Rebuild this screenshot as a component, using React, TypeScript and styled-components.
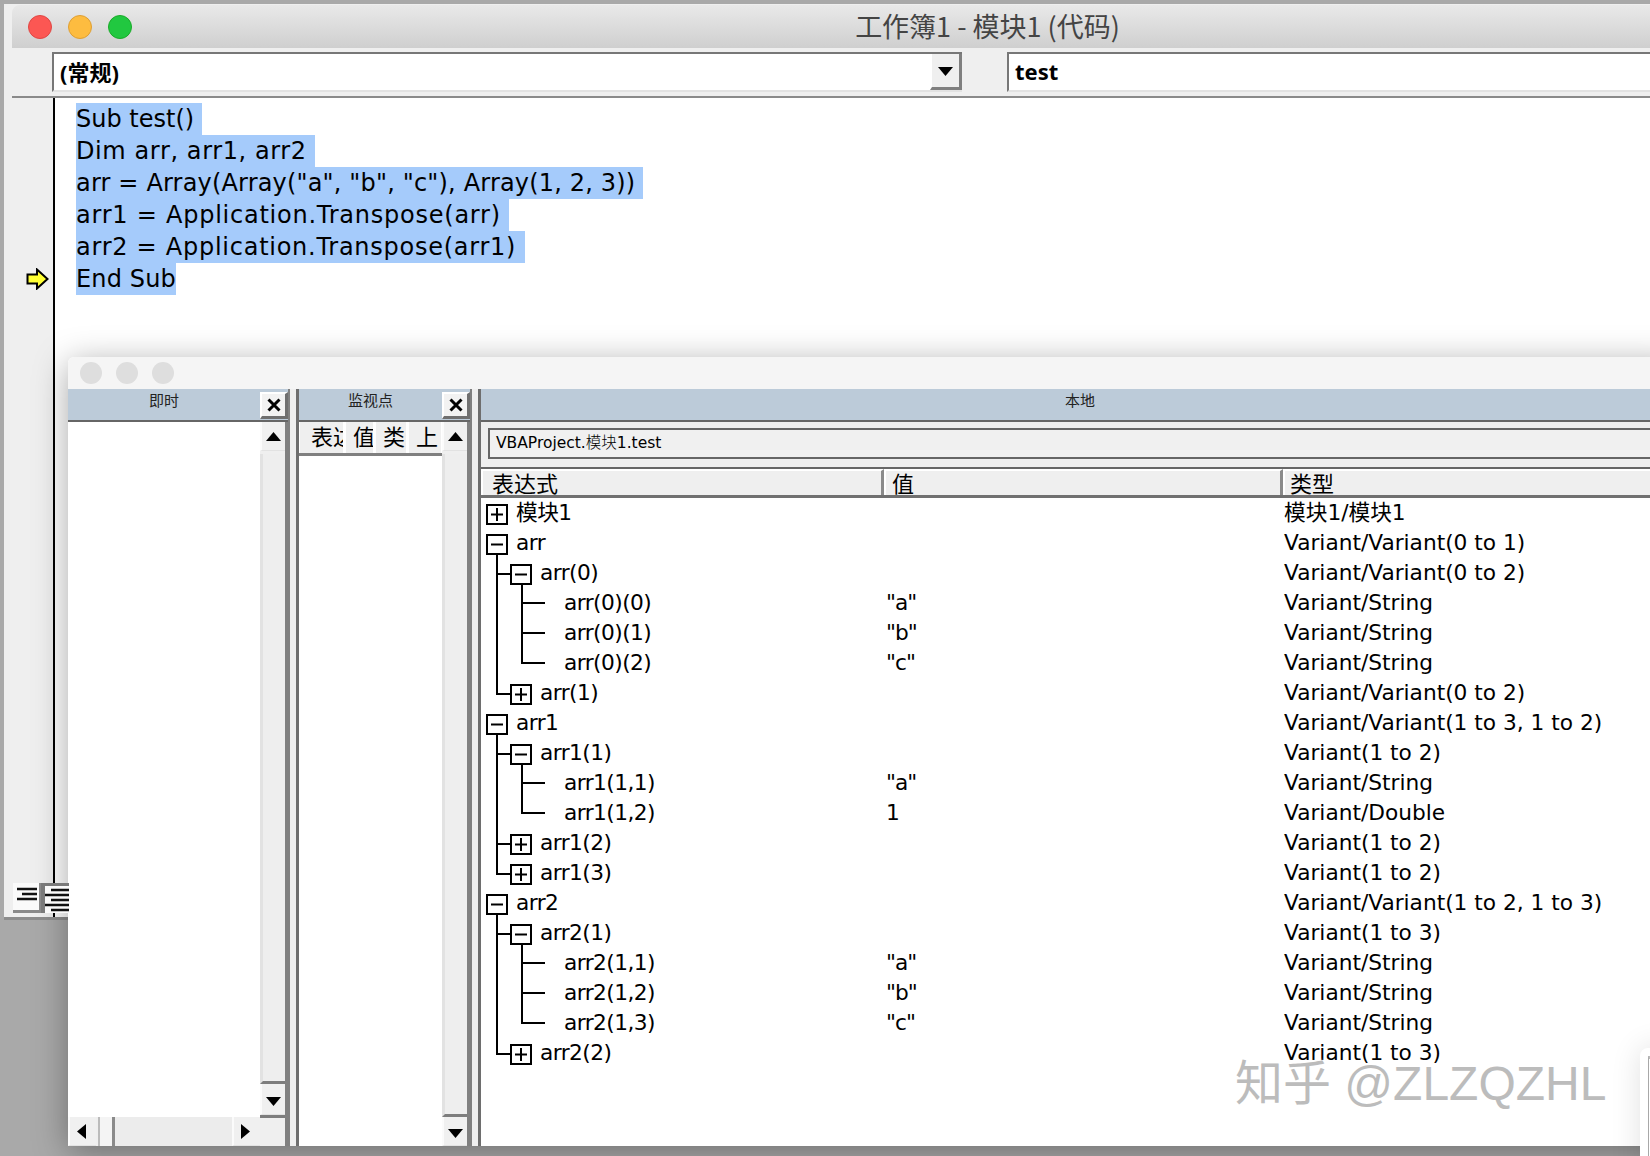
import styled, { createGlobalStyle } from 'styled-components'

const UI_FONT = `"DejaVu Sans", "Noto Sans CJK SC", sans-serif`

const GlobalStyle = createGlobalStyle`
  html, body {
    margin: 0;
    padding: 0;
    background: #a9a9a9;
  }
  * {
    box-sizing: border-box;
  }
`

type Row = {
  name: string
  depth: 0 | 1 | 2
  value?: string
  type: string
  toggle?: 'plus' | 'minus'
  last?: boolean
}

const rows: Row[] = [
  { name: '模块1', depth: 0, toggle: 'plus', type: '模块1/模块1' },
  { name: 'arr', depth: 0, toggle: 'minus', type: 'Variant/Variant(0 to 1)' },
  { name: 'arr(0)', depth: 1, toggle: 'minus', type: 'Variant/Variant(0 to 2)' },
  { name: 'arr(0)(0)', depth: 2, value: '"a"', type: 'Variant/String' },
  { name: 'arr(0)(1)', depth: 2, value: '"b"', type: 'Variant/String' },
  { name: 'arr(0)(2)', depth: 2, value: '"c"', type: 'Variant/String', last: true },
  { name: 'arr(1)', depth: 1, toggle: 'plus', type: 'Variant/Variant(0 to 2)', last: true },
  { name: 'arr1', depth: 0, toggle: 'minus', type: 'Variant/Variant(1 to 3, 1 to 2)' },
  { name: 'arr1(1)', depth: 1, toggle: 'minus', type: 'Variant(1 to 2)' },
  { name: 'arr1(1,1)', depth: 2, value: '"a"', type: 'Variant/String' },
  { name: 'arr1(1,2)', depth: 2, value: '1', type: 'Variant/Double', last: true },
  { name: 'arr1(2)', depth: 1, toggle: 'plus', type: 'Variant(1 to 2)' },
  { name: 'arr1(3)', depth: 1, toggle: 'plus', type: 'Variant(1 to 2)', last: true },
  { name: 'arr2', depth: 0, toggle: 'minus', type: 'Variant/Variant(1 to 2, 1 to 3)' },
  { name: 'arr2(1)', depth: 1, toggle: 'minus', type: 'Variant(1 to 3)' },
  { name: 'arr2(1,1)', depth: 2, value: '"a"', type: 'Variant/String' },
  { name: 'arr2(1,2)', depth: 2, value: '"b"', type: 'Variant/String' },
  { name: 'arr2(1,3)', depth: 2, value: '"c"', type: 'Variant/String', last: true },
  { name: 'arr2(2)', depth: 1, toggle: 'plus', type: 'Variant(1 to 3)', last: true },
]

// tracking: the original font runs wider on some lines than DejaVu does
const codeLines = [
  { text: 'Sub test() ', tracking: 0 },
  { text: 'Dim arr, arr1, arr2 ', tracking: 0.6 },
  { text: 'arr = Array(Array("a", "b", "c"), Array(1, 2, 3)) ', tracking: 0.17 },
  { text: 'arr1 = Application.Transpose(arr) ', tracking: 0.76 },
  { text: 'arr2 = Application.Transpose(arr1) ', tracking: 0.74 },
  { text: 'End Sub', tracking: 0.15 },
]

const TreeLines = ({ row }: { row: Row }) => {
  const width = 33 + row.depth * 24
  const boxX = row.depth === 0 ? 5 : 29
  const parts: string[] = []
  if (row.depth > 0) {
    const end = row.last && row.depth === 1 ? 16 : 30
    parts.push(`M16 0V${end}`)
    if (row.depth === 1) parts.push('M15 16H30')
  }
  if (row.depth === 2) {
    parts.push(`M41 0V${row.last ? 16 : 30}`)
    parts.push('M40 15H64')
  }
  if (row.toggle === 'minus') {
    const x = row.depth === 0 ? 16 : 41
    parts.push(`M${x} 26V30`)
  }
  return (
    <svg width={width} height={30} style={{ flexShrink: 0 }}>
      <path d={parts.join('')} stroke="#000" strokeWidth={2} fill="none" />
      {row.toggle && (
        <g stroke="#000" strokeWidth={2} fill="#fff">
          <rect x={boxX + 1} y={7} width={20} height={19} />
          <path d={`M${boxX + 5} 16.5H${boxX + 17}`} />
          {row.toggle === 'plus' && <path d={`M${boxX + 11} 10V23`} />}
        </g>
      )}
    </svg>
  )
}

const Triangle = ({ dir }: { dir: 'up' | 'down' | 'left' | 'right' }) => {
  const points = {
    up: '0,9 7.5,0 15,9',
    down: '0,0 15,0 7.5,9',
    left: '9,0 9,15 0,7.5',
    right: '0,0 9,7.5 0,15',
  }[dir]
  const horizontal = dir === 'left' || dir === 'right'
  return (
    <svg width={horizontal ? 9 : 15} height={horizontal ? 15 : 9}>
      <polygon points={points} fill="#000" />
    </svg>
  )
}

const CloseIcon = () => (
  <svg width={14} height={14}>
    <path d="M1.5 1.5L12.5 12.5M12.5 1.5L1.5 12.5" stroke="#000" strokeWidth={3} />
  </svg>
)

export default function App() {
  return (
    <>
      <GlobalStyle />
      <Desktop>
        <MainWindow>
          <TitleBar>
            <Lights>
              <Light $color="#fc5753" $ring="#df4744" />
              <Light $color="#fdbc40" $ring="#de9f34" />
              <Light $color="#21c840" $ring="#1aab29" />
            </Lights>
            <WindowTitle>工作簿1 - 模块1 (代码)</WindowTitle>
          </TitleBar>
          <Toolbar>
            <Combo $width={910}>
              <ComboText>(常规)</ComboText>
              <ComboButton>
                <Triangle dir="down" />
              </ComboButton>
            </Combo>
            <Combo $grow>
              <ComboText>test</ComboText>
            </Combo>
          </Toolbar>
          <EditorArea>
            <Gutter>
              <ArrowSlot>
                <svg width={23} height={22} viewBox="0 0 23 22">
                  <polygon
                    points="1.5,6.5 11,6.5 11,1.5 21.5,11 11,20.5 11,15.5 1.5,15.5"
                    fill="#ffff33"
                    stroke="#000"
                    strokeWidth={2}
                  />
                </svg>
              </ArrowSlot>
              <ViewButtons>
                <ViewButton>
                  <svg width={24} height={24}>
                    <path d="M3 4H23M8 9H23M3 14H23" stroke="#111" strokeWidth={2.4} />
                  </svg>
                </ViewButton>
                <ViewButton $pressed>
                  <svg width={24} height={24}>
                    <path d="M6 2H24M0 7H24M6 12H24M0 17H24M6 22H24" stroke="#111" strokeWidth={2.4} />
                  </svg>
                </ViewButton>
              </ViewButtons>
            </Gutter>
            <Code>
              {codeLines.map((line) => (
                <CodeLine key={line.text}>
                  <Selected $tracking={line.tracking}>{line.text}</Selected>
                </CodeLine>
              ))}
            </Code>
          </EditorArea>
        </MainWindow>

        <DebugWindow>
          <DebugTitleBar>
            <DimLight />
            <DimLight />
            <DimLight />
          </DebugTitleBar>
          <Panes>
            <Pane $width={220}>
              <PaneHeader>
                <PaneTitle>即时</PaneTitle>
                <CloseButton>
                  <CloseIcon />
                </CloseButton>
              </PaneHeader>
              <PaneBody>
                <PaneContent>
                  <Blank />
                  <HScroll>
                    <ScrollButton $wide>
                      <Triangle dir="left" />
                    </ScrollButton>
                    <HThumb />
                    <HTrack />
                    <ScrollButton $wide>
                      <Triangle dir="right" />
                    </ScrollButton>
                  </HScroll>
                </PaneContent>
                <ScrollColumn>
                  <ScrollButton>
                    <Triangle dir="up" />
                  </ScrollButton>
                  <ScrollTrack />
                  <ScrollButton $tall $low>
                    <Triangle dir="down" />
                  </ScrollButton>
                  <ScrollCorner />
                </ScrollColumn>
              </PaneBody>
            </Pane>
            <PaneDivider />
            <Pane $width={171}>
              <PaneHeader>
                <PaneTitle>监视点</PaneTitle>
                <CloseButton>
                  <CloseIcon />
                </CloseButton>
              </PaneHeader>
              <PaneBody>
                <PaneContent>
                  <WatchTabs>
                    <WatchTab $width={44}>表达</WatchTab>
                    <WatchTab $width={28}>值</WatchTab>
                    <WatchTab $width={31}>类</WatchTab>
                    <WatchTab $width={33}>上</WatchTab>
                  </WatchTabs>
                  <Blank />
                </PaneContent>
                <ScrollColumn>
                  <ScrollButton>
                    <Triangle dir="up" />
                  </ScrollButton>
                  <ScrollTrack />
                  <ScrollButton $low>
                    <Triangle dir="down" />
                  </ScrollButton>
                </ScrollColumn>
              </PaneBody>
            </Pane>
            <PaneDivider />
            <Pane $grow>
              <PaneHeader>
                <PaneTitle>本地</PaneTitle>
              </PaneHeader>
              <ContextBar>
                <ContextBox>
                  VBAProject.<CjkSmall>模块</CjkSmall>1.test
                </ContextBox>
              </ContextBar>
              <ColumnHeaders>
                <ColumnHeader $width={403} $pad={9}>表达式</ColumnHeader>
                <ColumnHeader $width={399} $pad={6}>值</ColumnHeader>
                <ColumnHeader $pad={5}>类型</ColumnHeader>
              </ColumnHeaders>
              <Locals>
                {rows.map((row) => (
                  <LocalRow key={row.name}>
                    <NameCell>
                      <TreeLines row={row} />
                      <NameText>{row.name}</NameText>
                    </NameCell>
                    <ValueText>{row.value}</ValueText>
                    <span>{row.type}</span>
                  </LocalRow>
                ))}
              </Locals>
            </Pane>
          </Panes>
        </DebugWindow>

        <CornerWindow>
          <CornerInner />
        </CornerWindow>
        <Watermark>知乎 @ZLZQZHL</Watermark>
      </Desktop>
    </>
  )
}

const Desktop = styled.div`
  position: relative;
  width: 1650px;
  height: 1156px;
  overflow: hidden;
  padding: 4px 0 0 4px;
  background: #a9a9a9;
  font-family: ${UI_FONT};
  color: #000;
`

const MainWindow = styled.div`
  width: 1959px;
  height: 916px;
  display: flex;
  flex-direction: column;
  padding: 1px 0 0 8px;
  background: #efefef;
  border-bottom: 3px solid #8d8d8d;
`

const TitleBar = styled.div`
  position: relative;
  flex: 0 0 43px;
  display: flex;
  align-items: center;
  justify-content: center;
  border-radius: 8px 0 0 0;
  background: linear-gradient(#e9e9e9, #cfcfcf);
`

const Lights = styled.div`
  position: absolute;
  left: 16px;
  top: 10px;
  display: flex;
  gap: 16px;
`

const Light = styled.span<{ $color: string; $ring: string }>`
  width: 24px;
  height: 24px;
  border-radius: 50%;
  background: ${(p) => p.$color};
  border: 1px solid ${(p) => p.$ring};
`

const WindowTitle = styled.div`
  margin-top: -2px;
  font-family: "Noto Sans CJK SC", "Noto Sans", sans-serif;
  font-size: 27px;
  font-weight: 400;
  color: #444;
`

const Toolbar = styled.div`
  flex: 0 0 50px;
  display: flex;
  align-items: flex-start;
  gap: 45px;
  padding: 4px 0 0 40px;
  background: #efefef;
  border-bottom: 2px solid #8a8a8a;
`

const Combo = styled.div<{ $width?: number; $grow?: boolean }>`
  ${(p) => (p.$width ? `width: ${p.$width}px;` : '')}
  ${(p) => (p.$grow ? 'flex: 1;' : '')}
  height: 40px;
  display: flex;
  align-items: center;
  justify-content: space-between;
  background: #fff;
  border-style: solid;
  border-width: 2px 0 2px 2px;
  border-color: #777 #e2e2e2 #e2e2e2 #777;
`

const ComboText = styled.span`
  padding: 0 0 3px 6px;
  font-family: "Noto Sans", "Noto Sans CJK SC", sans-serif;
  font-size: 22px;
  font-weight: 700;
`

const ComboButton = styled.div`
  width: 32px;
  height: 36px;
  display: flex;
  align-items: center;
  justify-content: center;
  padding-top: 2px;
  background: #efefef;
  border-left: 2px solid #fff;
  border-right: 3px solid #7f7f7f;
  border-bottom: 3px solid #7f7f7f;
`

const EditorArea = styled.div`
  flex: 1;
  display: flex;
  min-height: 0;
`

const Gutter = styled.div`
  position: relative;
  flex: 0 0 41px;
  background: #efefef;
`

const ArrowSlot = styled.div`
  position: absolute;
  left: 14px;
  top: 170px;
`

const ViewButtons = styled.div`
  position: absolute;
  left: 1px;
  bottom: 4px;
  display: flex;
  width: 56px;
  z-index: 1;
`

const ViewButton = styled.div<{ $pressed?: boolean }>`
  width: 28px;
  height: 30px;
  display: flex;
  align-items: center;
  justify-content: center;
  background: #fafafa;
  ${(p) =>
    p.$pressed
      ? 'border-top: 3px solid #7a7a7a; border-left: 4px solid #7a7a7a;'
      : 'border-bottom: 3px solid #8a8a8a; border-right: 2px solid #8a8a8a;'}
`

const Code = styled.div`
  flex: 1;
  padding: 5px 0 0 21px;
  background: #fff;
  border-left: 2px solid #000;
  font-size: 24px;
`

const CodeLine = styled.div`
  height: 32px;
  line-height: 32px;
  white-space: pre;
`

const Selected = styled.span<{ $tracking: number }>`
  display: inline-block;
  letter-spacing: ${(p) => p.$tracking}px;
  background: #a5cbfb;
`

const DebugWindow = styled.div`
  position: absolute;
  left: 68px;
  top: 357px;
  width: 1611px;
  height: 789px;
  display: flex;
  flex-direction: column;
  border-radius: 6px 0 0 0;
  background: #fff;
  box-shadow: 0 6px 34px rgba(0, 0, 0, 0.35);
`

const DebugTitleBar = styled.div`
  flex: 0 0 32px;
  display: flex;
  align-items: center;
  gap: 14px;
  padding-left: 12px;
  border-radius: 6px 0 0 0;
  background: #f5f5f5;
`

const DimLight = styled.span`
  width: 22px;
  height: 22px;
  border-radius: 50%;
  background: #dedede;
`

const Panes = styled.div`
  flex: 1;
  display: flex;
  min-height: 0;
`

const Pane = styled.div<{ $width?: number; $grow?: boolean }>`
  ${(p) => (p.$width ? `flex: 0 0 ${p.$width}px;` : '')}
  ${(p) => (p.$grow ? 'flex: 1;' : '')}
  display: flex;
  flex-direction: column;
  min-width: 0;
  background: #fff;
`

const PaneDivider = styled.div`
  flex: 0 0 11px;
  background: #efefef;
  border-left: 2px solid #808080;
  border-right: 3px solid #6e6e6e;
`

const PaneHeader = styled.div`
  flex: 0 0 33px;
  display: flex;
  background: #bccbd9;
  border-bottom: 2px solid #666;
`

const PaneTitle = styled.div`
  flex: 1;
  text-align: center;
  font-size: 15px;
  line-height: 22px;
  font-family: "Noto Sans CJK SC", sans-serif;
  color: #222;
`

const CloseButton = styled.div`
  flex: 0 0 28px;
  height: 27px;
  margin-top: 3px;
  display: flex;
  align-items: center;
  justify-content: center;
  background: #f2f2f2;
  border-top: 2px solid #fff;
  border-left: 2px solid #fff;
  border-right: 3px solid #6f6f6f;
  border-bottom: 3px solid #6f6f6f;
`

const PaneBody = styled.div`
  flex: 1;
  display: flex;
  min-height: 0;
`

const PaneContent = styled.div`
  flex: 1;
  display: flex;
  flex-direction: column;
  min-width: 0;
`

const Blank = styled.div`
  flex: 1;
  background: #fff;
`

const ScrollColumn = styled.div`
  flex: 0 0 28px;
  display: flex;
  flex-direction: column;
  background: #efefef;
  border-right: 3px solid #808080;
`

const ScrollButton = styled.div<{ $wide?: boolean; $tall?: boolean; $low?: boolean }>`
  flex: 0 0 ${(p) => (p.$wide ? '28px' : p.$tall ? '31px' : '29px')};
  ${(p) => (p.$wide ? 'height: 29px; padding-right: 4px;' : '')}
  ${(p) => (p.$low ? 'padding-top: 4px;' : '')}
  display: flex;
  align-items: center;
  justify-content: center;
  background: #f0f0f0;
  border-left: 2px solid #fbfbfb;
  border-bottom: 1px solid #e2e2e2;
`

const ScrollTrack = styled.div`
  flex: 1;
  margin-top: 3px;
  background: #eeeeee;
  border-left: 3px solid #e2e2e2;
  border-bottom: 3px solid #7d7d7d;
`

const ScrollCorner = styled.div`
  flex: 0 0 31px;
  background: #efefef;
  border-top: 3px solid #7d7d7d;
`

const HScroll = styled.div`
  flex: 0 0 29px;
  display: flex;
  background: #efefef;
`

const HThumb = styled.div`
  flex: 0 0 17px;
  margin-left: 2px;
  background: #f4f4f4;
  border-left: 2px solid #bbb;
  border-right: 3px solid #8a8a8a;
`

const HTrack = styled.div`
  flex: 1;
  background: #ececec;
`

const WatchTabs = styled.div`
  flex: 0 0 29px;
  display: flex;
  gap: 2px;
  background: #fff;
  border-bottom: 3px solid #808080;
`

const WatchTab = styled.div<{ $width: number }>`
  flex: 0 0 ${(p) => p.$width}px;
  overflow: hidden;
  white-space: nowrap;
  padding-left: 7px;
  font-size: 22px;
  line-height: 31px;
  background: #efefef;
  border-left: 1px solid #fff;

  &:first-child {
    padding-left: 11px;
  }
`

const ContextBar = styled.div`
  flex: 0 0 47px;
  padding: 6px 0 0 7px;
  background: #efefef;
  border-bottom: 2px solid #666;
`

const ContextBox = styled.div`
  height: 31px;
  padding-left: 6px;
  font-size: 15.5px;
  line-height: 26px;
  background: #f0f0f0;
  border: 2px solid #666;
`

const CjkSmall = styled.span`
  font-weight: 300;
`

const ColumnHeaders = styled.div`
  flex: 0 0 29px;
  display: flex;
  overflow: hidden;
  border-bottom: 3px solid #707070;
`

const ColumnHeader = styled.div<{ $width?: number; $pad: number }>`
  ${(p) => (p.$width ? `flex: 0 0 ${p.$width}px;` : 'flex: 1;')}
  padding-left: ${(p) => p.$pad}px;
  font-size: 22px;
  line-height: 27px;
  background: #efefef;
  border-top: 2px solid #fff;
  border-left: 2px solid #fff;
  border-right: 3px solid #8a8a8a;
`

const Locals = styled.div`
  flex: 1;
  background: #fff;
`

const LocalRow = styled.div`
  height: 30px;
  display: grid;
  grid-template-columns: 405px 398px 1fr;
  align-items: center;
  font-size: 21.7px;
  line-height: 30px;
  white-space: nowrap;
`

const NameCell = styled.div`
  display: flex;
  align-items: center;
  gap: 2px;
`

const NameText = styled.span`
  letter-spacing: -0.55px;
`

const ValueText = styled.span`
  letter-spacing: -1px;
`

const CornerWindow = styled.div`
  position: absolute;
  left: 1640px;
  top: 1048px;
  width: 60px;
  height: 140px;
  padding: 8px 0 0 8px;
  border-radius: 8px 0 0 0;
  background: #fff;
  box-shadow: 0 0 30px rgba(0, 0, 0, 0.12);
`

const CornerInner = styled.div`
  height: 100%;
  border: 1px solid #a8a8a8;
  border-top: 3px solid #bbb;
`

const Watermark = styled.div`
  position: absolute;
  left: 1235px;
  top: 1052px;
  font-family: "Liberation Sans", "Noto Sans CJK SC", sans-serif;
  font-size: 48px;
  line-height: 64px;
  white-space: nowrap;
  color: #bcbcbc;
  text-shadow: 0 0 3px #fff;
`
